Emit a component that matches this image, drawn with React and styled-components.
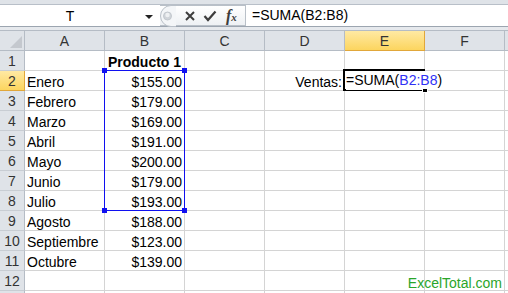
import React from 'react';
import styled, { createGlobalStyle } from 'styled-components';

const GlobalStyle = createGlobalStyle`
  html, body { margin: 0; padding: 0; background: #fff; }
  * { box-sizing: border-box; }
`;

const COLS = ['A', 'B', 'C', 'D', 'E', 'F', ''];

const rows = [
  { a: '', b: 'Producto 1', bold: true },
  { a: 'Enero', b: '$155.00' },
  { a: 'Febrero', b: '$179.00' },
  { a: 'Marzo', b: '$169.00' },
  { a: 'Abril', b: '$191.00' },
  { a: 'Mayo', b: '$200.00' },
  { a: 'Junio', b: '$179.00' },
  { a: 'Julio', b: '$193.00' },
  { a: 'Agosto', b: '$188.00' },
  { a: 'Septiembre', b: '$123.00' },
  { a: 'Octubre', b: '$139.00' },
  { a: '', b: '' },
  { a: '', b: '' },
];

const App = () => {
  return (
    <>
      <GlobalStyle />
      <Window>
        <TopStrip />
        <FormulaBar>
          <NameBox>
            <NameText>T</NameText>
            <DropArrow />
          </NameBox>
          <Controls>
            <Grip viewBox="0 0 18 22" width="18" height="22">
              <path d="M17 0.5 H12 A10.5 10.5 0 0 0 12 21.5 H17" fill="#f4f6f8" stroke="#b9c0c8" />
              <circle cx="8.5" cy="11" r="4" fill="#d0d4d9" stroke="#c3c8ce" />
              <circle cx="8.5" cy="10" r="2.2" fill="#eef0f2" />
            </Grip>
            <Icon viewBox="0 0 12 12" width="12" height="12">
              <path d="M2 2 L10 10 M10 2 L2 10" stroke="#3d3d3d" strokeWidth="2" />
            </Icon>
            <Icon viewBox="0 0 14 12" width="14" height="12">
              <path d="M1.5 6 L5 10 L12.5 1.5" stroke="#3d3d3d" strokeWidth="2.2" fill="none" />
            </Icon>
            <Fx>
              f<small>x</small>
            </Fx>
          </Controls>
          <FormulaInput>=SUMA(B2:B8)</FormulaInput>
        </FormulaBar>
        <Gap />
        <GridWrap>
          <Grid>
            <Corner>
              <svg viewBox="0 0 12 12" width="12" height="12">
                <path d="M12 0 V12 H0 Z" fill="#c4c8ce" />
              </svg>
            </Corner>
            {COLS.map((c, i) => (
              <ColHeader key={'h' + i} $active={c === 'E'}>{c}</ColHeader>
            ))}
            {rows.map((r, ri) => (
              <React.Fragment key={ri}>
                <RowHeader $active={ri === 1}>{ri < 12 ? ri + 1 : ''}</RowHeader>
                <Cell>{r.a}</Cell>
                <Cell $align={r.bold ? 'center' : 'right'} $bold={r.bold}>{r.b}</Cell>
                <Cell />
                <Cell $align="right">{ri === 1 ? 'Ventas:' : ''}</Cell>
                <Cell />
                <Cell />
                <Cell />
              </React.Fragment>
            ))}
          </Grid>
          <RangeBox>
            <Handle style={{ left: -3, top: -3 }} />
            <Handle style={{ right: -3, top: -3 }} />
            <Handle style={{ left: -3, bottom: -3 }} />
            <Handle style={{ right: -3, bottom: -3 }} />
          </RangeBox>
          <ActiveCell>
            <EditText>
              =SUMA(<Ref>B2:B8</Ref>)
            </EditText>
            <FillHandle />
          </ActiveCell>
        </GridWrap>
        <Watermark>ExcelTotal.com</Watermark>
      </Window>
    </>
  );
};

export default App;

const Window = styled.div`
  position: relative;
  width: 508px;
  height: 293px;
  overflow: hidden;
  background: #fff;
  font-family: "Liberation Sans", Arial, sans-serif;
  color: #000;
`;

const TopStrip = styled.div`
  height: 5px;
  background: #dfe3e8;
  border-bottom: 1px solid #b8bfc8;
`;

const FormulaBar = styled.div`
  display: flex;
  height: 21px;
  background: #fff;
`;

const NameBox = styled.div`
  width: 160px;
  display: flex;
  align-items: center;
`;

const NameText = styled.div`
  width: 140px;
  text-align: center;
  font-size: 14px;
`;

const DropArrow = styled.div`
  width: 0;
  height: 0;
  margin-left: 5px;
  margin-top: 2px;
  border-left: 4px solid transparent;
  border-right: 4px solid transparent;
  border-top: 4px solid #222;
`;

const Controls = styled.div`
  width: 86px;
  display: flex;
  align-items: center;
  background: linear-gradient(#ffffff, #eef1f4);
  border-right: 1px solid #b9c0c8;
  border-top: 1px solid #b9c0c8;
  border-bottom: 1px solid #b9c0c8;
`;

const Grip = styled.svg`
  flex: none;
  margin: -1px 0 -1px -1px;
`;

const Icon = styled.svg`
  flex: none;
  margin-left: 7px;
`;

const Fx = styled.div`
  margin-left: 9px;
  font-family: "Liberation Serif", "Times New Roman", serif;
  font-style: italic;
  font-weight: bold;
  font-size: 16px;
  color: #3d3d3d;
  small {
    font-size: 11px;
  }
`;

const FormulaInput = styled.div`
  flex: 1;
  padding-left: 6px;
  font-size: 14px;
  line-height: 21px;
`;

const Gap = styled.div`
  height: 5px;
  background: #e6e9ed;
  border-top: 1px solid #9ca5b0;
  border-bottom: 1px solid #b5bcc5;
`;

const GridWrap = styled.div`
  position: relative;
`;

const Grid = styled.div`
  display: grid;
  grid-template-columns: 25px repeat(6, 80px) 20px;
  grid-auto-rows: 20px;
`;

const Corner = styled.div`
  background: #dfe3e8;
  border-right: 1px solid #b5bcc5;
  border-bottom: 1px solid #b5bcc5;
  display: flex;
  align-items: flex-end;
  justify-content: flex-end;
  padding: 0 2px 2px 0;
`;

const headerBase = `
  display: flex;
  align-items: center;
  justify-content: center;
  font-size: 14px;
  color: #333;
`;

const ColHeader = styled.div`
  ${headerBase}
  background: ${(p) => (p.$active ? 'linear-gradient(#ffe9a3, #fcd55f)' : '#dfe3e8')};
  border-right: 1px solid ${(p) => (p.$active ? '#e1a73a' : '#b5bcc5')};
  border-bottom: 1px solid ${(p) => (p.$active ? '#e1a73a' : '#b5bcc5')};
`;

const RowHeader = styled.div`
  ${headerBase}
  background: ${(p) => (p.$active ? 'linear-gradient(#ffe9a3, #fcd55f)' : '#dfe3e8')};
  border-right: 1px solid ${(p) => (p.$active ? '#e1a73a' : '#b5bcc5')};
  border-bottom: 1px solid ${(p) => (p.$active ? '#e1a73a' : '#c8cdd3')};
`;

const Cell = styled.div`
  border-right: 1px solid #d4d4d4;
  border-bottom: 1px solid #d4d4d4;
  font-size: 14px;
  font-weight: ${(p) => (p.$bold ? 'bold' : 'normal')};
  text-align: ${(p) => p.$align || 'left'};
  padding: 1px 2px 0;
  line-height: 20px;
  white-space: nowrap;
  overflow: visible;
`;

const RangeBox = styled.div`
  position: absolute;
  left: 104px;
  top: 39px;
  width: 81px;
  height: 141px;
  border: 1px solid #1010f0;
`;

const Handle = styled.div`
  position: absolute;
  width: 5px;
  height: 5px;
  background: #1010f0;
`;

const ActiveCell = styled.div`
  position: absolute;
  left: 343px;
  top: 38px;
  width: 82px;
  height: 22px;
  border: 2px solid #000;
  border-right: none;
`;

const EditText = styled.div`
  position: absolute;
  left: 1px;
  top: 0;
  background: #fff;
  font-size: 14px;
  line-height: 19px;
  white-space: nowrap;
  padding-right: 1px;
`;

const Ref = styled.span`
  color: #2f2ff5;
`;

const FillHandle = styled.div`
  position: absolute;
  right: -3px;
  bottom: -4px;
  width: 6px;
  height: 5px;
  background: #000;
  border: 1px solid #fff;
`;

const Watermark = styled.div`
  position: absolute;
  right: 6px;
  bottom: 2px;
  font-size: 14px;
  color: #2aa52a;
`;
